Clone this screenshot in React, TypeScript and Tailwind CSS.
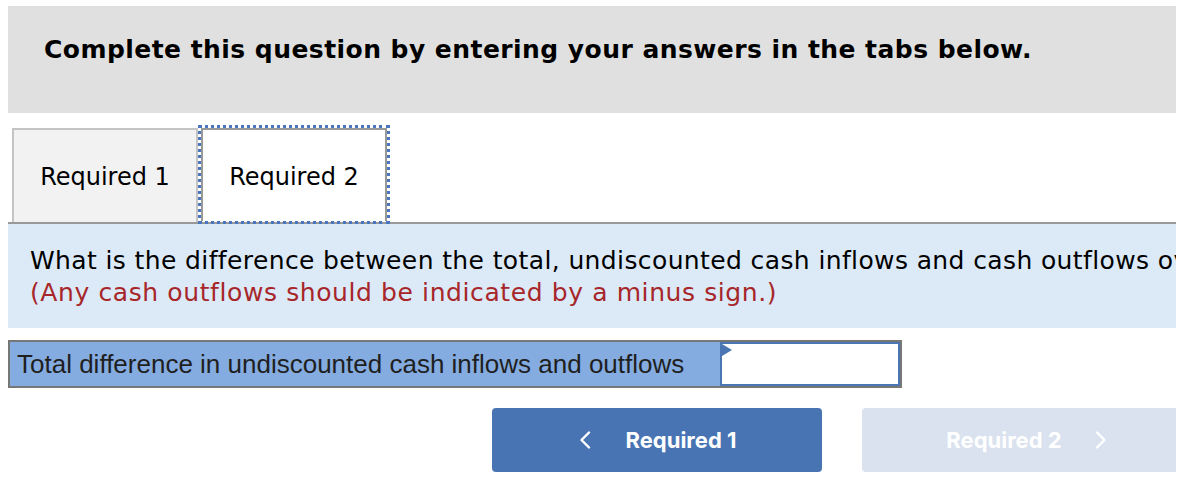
const verdana = "font-['DejaVu_Sans',Verdana,sans-serif]";

function Chevron({ dir }: { dir: "left" | "right" }) {
  return (
    <svg width="14" height="18" viewBox="0 0 14 18" fill="none" aria-hidden>
      <polyline
        points={dir === "left" ? "11,1.5 3.5,9 11,16.5" : "3,1.5 10.5,9 3,16.5"}
        stroke="currentColor"
        strokeWidth="2.4"
        strokeLinecap="round"
        strokeLinejoin="round"
      />
    </svg>
  );
}

export default function App() {
  return (
    <div className="h-[482px] w-[1188px] overflow-hidden bg-white">
      <div className="ml-2 w-[1168px] overflow-hidden pt-1.5">
        <div className="h-[107px] bg-[#e0e0e0] pl-9 pt-[29px]">
          <h1 className={`${verdana} text-[25px] font-bold leading-[30px] tracking-[0.45px] text-black`}>
            Complete this question by entering your answers in the tabs below.
          </h1>
        </div>

        <div className="mt-[12px] flex items-end border-b-2 border-[#999999] pl-1">
          <button className={`${verdana} flex h-[94px] w-[186px] items-center justify-center border-2 border-b-0 border-[#c4c4c4] bg-[#f2f2f2] pt-[2px] text-[24px] text-black`}>
            Required 1
          </button>
          <div className="-mb-[2px] border-[3px] border-dotted border-[#4a76c0]">
            <button className={`${verdana} flex h-[93px] w-[186px] items-center justify-center border-2 border-b-0 border-[#999999] bg-white pt-[2px] text-[24px] text-black`}>
              Required 2
            </button>
          </div>
        </div>

        <div className={`${verdana} h-[104px] whitespace-nowrap bg-[#dceaf7] pl-[22px] pt-[21px] text-[25px] leading-[32px]`}>
          <p className="tracking-[0.38px] text-black">
            What is the difference between the total, undiscounted cash inflows and cash outflows over the life of the investment?
          </p>
          <p className="tracking-[0.6px] text-[#a7262a]">(Any cash outflows should be indicated by a minus sign.)</p>
        </div>

        <div className="mt-[12px] flex h-[48px] w-[894px] border-2 border-[#777777]">
          <div className="flex w-[710px] items-center bg-[#84ace0] pl-[7px] font-['Liberation_Sans',Arial,sans-serif] text-[26px] text-[#1f1f1f]">
            Total difference in undiscounted cash inflows and outflows
          </div>
          <div className="relative flex-1 border-2 border-[#4a76b4] bg-white">
            <span className="absolute left-0 top-0 h-0 w-0 border-y-[6px] border-l-[10px] border-y-transparent border-l-[#4a76b4]" />
          </div>
        </div>

        <div className="mt-[20px] flex gap-10 pl-[484px] font-['Inter',sans-serif]">
          <button className="flex h-[64px] w-[330px] shrink-0 items-center justify-center gap-[34px] rounded-[4px] bg-[#4874b3] text-[22px] font-bold text-white">
            <Chevron dir="left" />
            <span>Required 1</span>
          </button>
          <button className="flex h-[64px] w-[330px] shrink-0 items-center justify-center gap-[32px] rounded-[4px] bg-[#d9e2ee] text-[22px] font-bold text-white">
            <span>Required 2</span>
            <Chevron dir="right" />
          </button>
        </div>
      </div>
    </div>
  );
}
